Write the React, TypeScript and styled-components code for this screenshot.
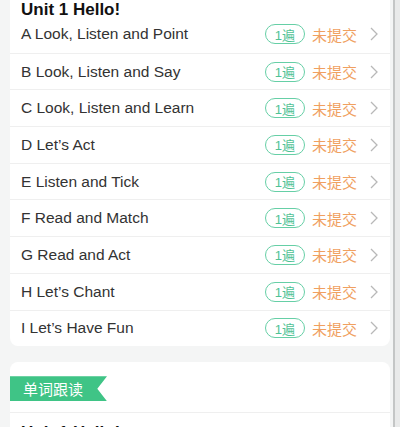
import React from "react";
import styled, { createGlobalStyle } from "styled-components";

const Global = createGlobalStyle`
  html, body { margin: 0; padding: 0; background: #f4f5f5; overflow: hidden; }
  body { font-family: "Liberation Sans", "Noto Sans CJK SC", sans-serif; }
`;

const Page = styled.div`
  display: flex;
  width: 400px;
  height: 427px;
  overflow: hidden;
`;

const Main = styled.div`
  flex: 1;
  display: flex;
  flex-direction: column;
  gap: 16px;
  padding-left: 10px;
`;

const Gutter = styled.div`
  width: 10px;
  display: flex;
  padding-left: 3px;
  box-sizing: border-box;
`;

const ScrollLine = styled.div`
  width: 2px;
  background: #c4c6c6;
`;

const ScrollTrack = styled.div`
  flex: 1;
  background: #e9eaea;
`;

const Card = styled.div<{ $top?: boolean }>`
  background: #ffffff;
  border-radius: ${(p) => (p.$top ? "0 0 8px 8px" : "8px")};
  display: flex;
  flex-direction: column;
  flex-shrink: 0;
`;

const Title = styled.div`
  font-size: 17px;
  line-height: 20px;
  font-weight: 700;
  color: #111;
  padding: 0 11px;
  height: 16px;
  display: flex;
  align-items: flex-start;
  white-space: nowrap;
`;

const Row = styled.div<{ $first?: boolean }>`
  display: flex;
  align-items: center;
  height: 36.7px;
  box-sizing: border-box;
  padding: 0 11px;
  border-top: ${(p) => (p.$first ? "none" : "1px solid #efefef")};
`;

const Label = styled.div`
  flex: 1;
  font-size: 15.5px;
  color: #333;
`;

const Badge = styled.div`
  width: 40px;
  height: 20px;
  box-sizing: border-box;
  border: 1px solid #66cfa6;
  border-radius: 10px;
  color: #4fc295;
  font-size: 13px;
  display: flex;
  align-items: center;
  justify-content: center;
`;

const Status = styled.div`
  margin-left: 7px;
  font-size: 15px;
  color: #f0a060;
  font-family: "Noto Sans CJK SC", sans-serif;
`;

const Chevron = styled.svg`
  margin-left: 12px;
  width: 10px;
  height: 14px;
`;

const TagRow = styled.div`
  padding-top: 14px;
  height: 51px;
  box-sizing: border-box;
  border-bottom: 1px solid #efefef;
`;

const Tag = styled.div`
  width: 97px;
  height: 25px;
  background: #3fc486;
  color: #fff;
  font-size: 15px;
  font-family: "Noto Sans CJK SC", sans-serif;
  display: flex;
  align-items: center;
  padding-left: 13px;
  box-sizing: border-box;
  clip-path: polygon(0 0, 100% 0, 90% 50%, 100% 100%, 0 100%);
`;

const SubTitle = styled.div`
  font-size: 17px;
  font-weight: 700;
  color: #111;
  padding: 10px 11px 0;
`;

const items = [
  "A Look, Listen and Point",
  "B Look, Listen and Say",
  "C Look, Listen and Learn",
  "D Let\u2019s Act",
  "E Listen and Tick",
  "F Read and Match",
  "G Read and Act",
  "H Let\u2019s Chant",
  "I Let\u2019s Have Fun",
];

export default function App() {
  return (
    <>
      <Global />
      <Page>
        <Main>
          <Card $top>
            <Title>Unit 1 Hello!</Title>
            {items.map((t, i) => (
              <Row key={t} $first={i === 0}>
                <Label>{t}</Label>
                <Badge>1遍</Badge>
                <Status>未提交</Status>
                <Chevron viewBox="0 0 10 14">
                  <polyline points="2,1 8,7 2,13" fill="none" stroke="#b8b8b8" strokeWidth="1.3" />
                </Chevron>
              </Row>
            ))}
          </Card>
          <Card>
            <TagRow>
              <Tag>单词跟读</Tag>
            </TagRow>
            <SubTitle>Unit 1 Hello!</SubTitle>
          </Card>
        </Main>
        <Gutter>
          <ScrollLine />
          <ScrollTrack />
        </Gutter>
      </Page>
    </>
  );
}
